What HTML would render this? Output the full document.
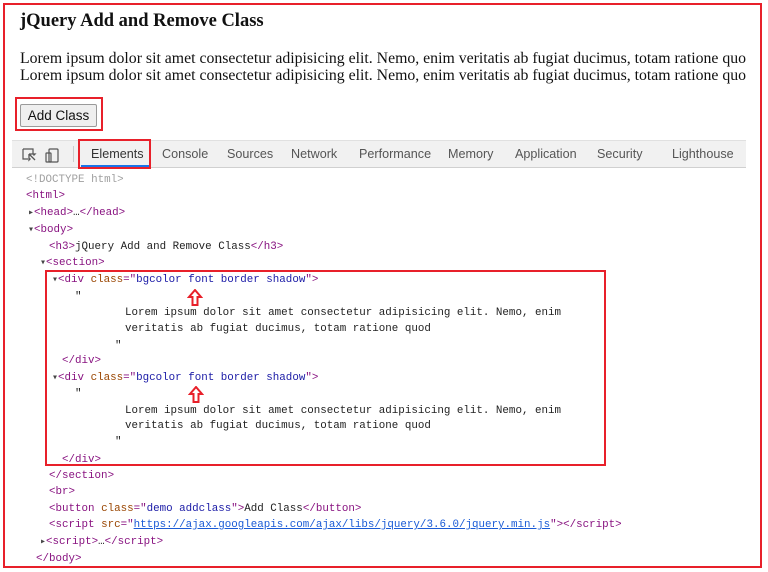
<!DOCTYPE html>
<html><head><style>
*{margin:0;padding:0;box-sizing:border-box}
body{width:768px;height:572px;background:#fff;position:relative;overflow:hidden;font-family:"Liberation Serif",serif}
.abs{position:absolute}
.rb{position:absolute;border:2px solid #e8202a}
h3{position:absolute;left:20px;top:11px;font-size:18.5px;font-weight:bold;color:#111}
.p{position:absolute;left:20px;font-size:15.8px;color:#111;white-space:nowrap;width:726px;overflow:hidden}
.btn{position:absolute;left:20px;top:104px;width:77px;height:23px;border:1px solid #9a9a9a;background:#efefef;border-radius:2px;font-family:"Liberation Sans",sans-serif;font-size:13.5px;text-align:center;line-height:21px;color:#111}
.tb{position:absolute;left:12px;top:140px;width:734px;height:28px;background:#f1f1f1;border-top:1px solid #e0e0e0;border-bottom:1px solid #d0d0d0}
.tab{position:absolute;top:147px;font-family:"Liberation Sans",sans-serif;font-size:12.6px;color:#555}
.ln{position:absolute;font-family:"Liberation Mono",monospace;font-size:10.85px;white-space:pre;color:#222;line-height:12px}
.t{color:#881280}.g{color:#a0a0a0}.a{color:#994500}.v{color:#1a1aa6}
.tri{color:#444;font-size:10px}
</style></head><body>
<div class="rb" style="left:3px;top:3px;width:759px;height:565px"></div>
<h3>jQuery Add and Remove Class</h3>
<div class="p" style="top:50px">Lorem ipsum dolor sit amet consectetur adipisicing elit. Nemo, enim veritatis ab fugiat ducimus, totam ratione quod</div>
<div class="p" style="top:67px">Lorem ipsum dolor sit amet consectetur adipisicing elit. Nemo, enim veritatis ab fugiat ducimus, totam ratione quod</div>
<div class="btn">Add Class</div>
<div class="rb" style="left:15px;top:97px;width:88px;height:34px"></div>
<div class="tb"></div>
<svg class="abs" style="left:20px;top:146px" width="44" height="18" viewBox="0 0 44 18" fill="none" stroke="#555" stroke-width="1.2">
<path d="M3 3h10v5M3 3v10h5"/><path d="M9 8l6 6M9 8v6l1.5-1.5M9 8h6l-1.5 1.5" stroke-width="1.3"/>
<rect x="29" y="3" width="9" height="13" rx="1"/><rect x="26" y="7" width="5" height="9" rx="0.5"/>
</svg>
<div class="abs" style="left:73px;top:146px;width:1px;height:16px;background:#ccc"></div>
<div class="abs" style="left:81px;top:165px;width:68px;height:2px;background:#1a73e8"></div>
<div class="tab" style="left:91px;color:#333">Elements</div>
<div class="tab" style="left:162px">Console</div>
<div class="tab" style="left:227px">Sources</div>
<div class="tab" style="left:291px">Network</div>
<div class="tab" style="left:359px">Performance</div>
<div class="tab" style="left:448px">Memory</div>
<div class="tab" style="left:515px">Application</div>
<div class="tab" style="left:597px">Security</div>
<div class="tab" style="left:672px">Lighthouse</div>
<div class="rb" style="left:78px;top:139px;width:73px;height:30px"></div>

<div class="ln g" style="left:26px;top:174px">&lt;!DOCTYPE html&gt;</div>
<div class="ln" style="left:26px;top:190px"><span class="t">&lt;html&gt;</span></div>
<div class="ln" style="left:28px;top:207px"><span class="tri">▸</span><span class="t">&lt;head&gt;</span>…<span class="t">&lt;/head&gt;</span></div>
<div class="ln" style="left:28px;top:224px"><span class="tri">▾</span><span class="t">&lt;body&gt;</span></div>
<div class="ln" style="left:49px;top:241px"><span class="t">&lt;h3&gt;</span>jQuery Add and Remove Class<span class="t">&lt;/h3&gt;</span></div>
<div class="ln" style="left:40px;top:257px"><span class="tri">▾</span><span class="t">&lt;section&gt;</span></div>
<div class="ln" style="left:52px;top:274px"><span class="tri">▾</span><span class="t">&lt;div </span><span class="a">class</span><span class="t">="</span><span class="v">bgcolor font border shadow</span><span class="t">"&gt;</span></div>
<div class="ln" style="left:75px;top:291px">"</div>
<div class="ln" style="left:125px;top:307px">Lorem ipsum dolor sit amet consectetur adipisicing elit. Nemo, enim</div>
<div class="ln" style="left:125px;top:323px">veritatis ab fugiat ducimus, totam ratione quod</div>
<div class="ln" style="left:115px;top:340px">"</div>
<div class="ln" style="left:62px;top:355px"><span class="t">&lt;/div&gt;</span></div>
<div class="ln" style="left:52px;top:372px"><span class="tri">▾</span><span class="t">&lt;div </span><span class="a">class</span><span class="t">="</span><span class="v">bgcolor font border shadow</span><span class="t">"&gt;</span></div>
<div class="ln" style="left:75px;top:388px">"</div>
<div class="ln" style="left:125px;top:405px">Lorem ipsum dolor sit amet consectetur adipisicing elit. Nemo, enim</div>
<div class="ln" style="left:125px;top:420px">veritatis ab fugiat ducimus, totam ratione quod</div>
<div class="ln" style="left:115px;top:436px">"</div>
<div class="ln" style="left:62px;top:454px"><span class="t">&lt;/div&gt;</span></div>
<div class="ln" style="left:49px;top:470px"><span class="t">&lt;/section&gt;</span></div>
<div class="ln" style="left:49px;top:486px"><span class="t">&lt;br&gt;</span></div>
<div class="ln" style="left:49px;top:503px"><span class="t">&lt;button </span><span class="a">class</span><span class="t">="</span><span class="v">demo addclass</span><span class="t">"&gt;</span>Add Class<span class="t">&lt;/button&gt;</span></div>
<div class="ln" style="left:49px;top:519px"><span class="t">&lt;script </span><span class="a">src</span><span class="t">="</span><span class="v" style="text-decoration:underline;color:#1a5bd6">https://ajax.googleapis.com/ajax/libs/jquery/3.6.0/jquery.min.js</span><span class="t">"&gt;&lt;/script&gt;</span></div>
<div class="ln" style="left:40px;top:536px"><span class="tri">▸</span><span class="t">&lt;script&gt;</span>…<span class="t">&lt;/script&gt;</span></div>
<div class="ln" style="left:36px;top:553px"><span class="t">&lt;/body&gt;</span></div>

<div class="rb" style="left:45px;top:270px;width:561px;height:196px"></div>
<svg class="abs" style="left:187px;top:289px" width="16" height="18" viewBox="0 0 16 18"><path d="M8 1L2 8h3.5v8h5V8H14z" fill="#fff" stroke="#e8202a" stroke-width="2"/></svg>
<svg class="abs" style="left:188px;top:386px" width="16" height="18" viewBox="0 0 16 18"><path d="M8 1L2 8h3.5v8h5V8H14z" fill="#fff" stroke="#e8202a" stroke-width="2"/></svg>
</body></html>
